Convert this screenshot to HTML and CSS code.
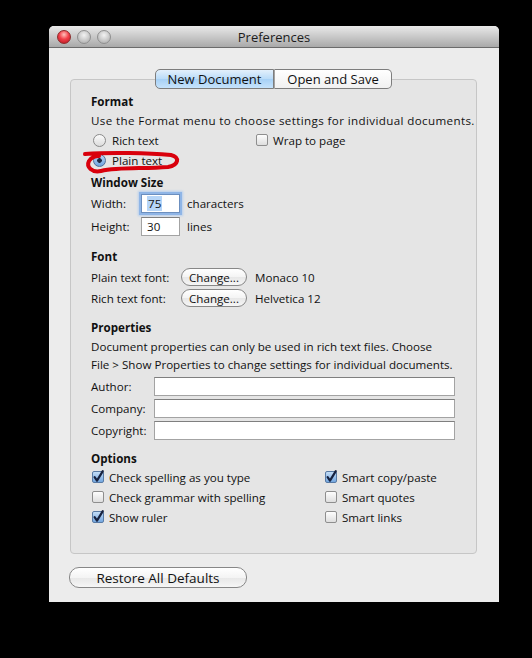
FILE: index.html
```html
<!DOCTYPE html>
<html>

<head>
    <title>Preferences</title>
    <meta name="viewport" content="width=device-width, initial-scale=1">
    <link rel="stylesheet" href="styles.css">
</head>

<body>
    <div class="window">
        <div class="titlebar">
            <div class="lights">
                <span class="light close"></span>
                <span class="light"></span>
                <span class="light"></span>
            </div>
            <div class="title">Preferences</div>
            <div></div>
        </div>

        <div class="content">
            <div class="tabs">
                <div class="tab active">New Document</div>
                <div class="tab">Open and Save</div>
            </div>

            <div class="box">
                <!-- Format -->
                <div class="heading">Format</div>
                <div class="row wide-text">Use the Format menu to choose settings for individual documents.</div>
                <div class="row format-cols">
                    <div class="opt radio-opt"><span class="radio"></span>Rich text</div>
                    <div class="opt"><span class="check"></span>Wrap to page</div>
                </div>
                <div class="row">
                    <div class="opt radio-opt"><span class="radio on"></span>Plain text</div>
                </div>

                <!-- Window size -->
                <div class="heading gap-s">Window Size</div>
                <div class="row field-row tight">
                    <span class="size-label">Width:</span>
                    <span class="input small focused"><span class="sel">75</span></span>
                    <span>characters</span>
                </div>
                <div class="row field-row tight">
                    <span class="size-label">Height:</span>
                    <span class="input small">30</span>
                    <span>lines</span>
                </div>

                <!-- Font -->
                <div class="heading gap-l">Font</div>
                <div class="row field-row font-first">
                    <span class="font-label">Plain text font:</span>
                    <span class="button change">Change...</span>
                    <span>Monaco 10</span>
                </div>
                <div class="row">
                    <span class="font-label">Rich text font:</span>
                    <span class="button change">Change...</span>
                    <span>Helvetica 12</span>
                </div>

                <!-- Properties -->
                <div class="heading gap-l">Properties</div>
                <div class="para">Document properties can only be used in rich text files. Choose<br>File &gt; Show Properties to change settings for individual documents.</div>
                <div class="row field-row prop">
                    <span class="prop-label">Author:</span>
                    <span class="input wide"></span>
                </div>
                <div class="row field-row prop">
                    <span class="prop-label">Company:</span>
                    <span class="input wide"></span>
                </div>
                <div class="row field-row prop">
                    <span class="prop-label">Copyright:</span>
                    <span class="input wide"></span>
                </div>

                <!-- Options -->
                <div class="heading gap-m">Options</div>
                <div class="options">
                    <div class="opt"><span class="check on"><svg viewBox="0 0 12 12"><path d="M2.6 6.2 L5 9.6 L10.8 0.2" /></svg></span>Check spelling as you type</div>
                    <div class="opt"><span class="check on"><svg viewBox="0 0 12 12"><path d="M2.6 6.2 L5 9.6 L10.8 0.2" /></svg></span>Smart copy/paste</div>
                    <div class="opt"><span class="check"></span>Check grammar with spelling</div>
                    <div class="opt"><span class="check"></span>Smart quotes</div>
                    <div class="opt"><span class="check on"><svg viewBox="0 0 12 12"><path d="M2.6 6.2 L5 9.6 L10.8 0.2" /></svg></span>Show ruler</div>
                    <div class="opt"><span class="check"></span>Smart links</div>
                </div>

                <!-- red marker scribble around "Plain text" -->
                <svg class="scribble" width="200" height="110" viewBox="0 0 200 110">
                    <path d="M14 74 C40 72 78 73 100 75 C109 77 108 85 97 87 C72 89 48 87 30 91 C21 93 15 87 18 81 C20 78 24 76 28 76" />
                </svg>
            </div>

            <div class="button restore">Restore All Defaults</div>
        </div>
    </div>
</body>

</html>
```

FILE: styles.css
```css
body {
    margin: 0;
    background: #000;
    font-family: "Open Sans", "DejaVu Sans", sans-serif;
    font-size: 11.6px;
    color: #111;
}

.window {
    margin: 26px 0 0 49px;
    width: 450px;
    height: 576px;
    background: #ececec;
    border-radius: 5px 5px 0 0;
    overflow: hidden;
    display: flex;
    flex-direction: column;
}

/* Title bar */
.titlebar {
    height: 21px;
    border-bottom: 1px solid #6b6b6b;
    background: linear-gradient(#e9e9e9, #a9a9a9);
    display: grid;
    grid-template-columns: 1fr auto 1fr;
    align-items: center;
}

.lights {
    display: flex;
    gap: 6px;
    padding-left: 8px;
}

.light {
    width: 14px;
    height: 14px;
    box-sizing: border-box;
    border-radius: 50%;
    border: 1px solid #8f8f8f;
    background: radial-gradient(circle at 50% 35%, #f2f2f2, #bdbdbd 70%, #a8a8a8);
}

.light.close {
    border-color: #8c2b2b;
    background: radial-gradient(circle at 50% 30%, #ffc2bb 0, #f2404a 45%, #b3121c 100%);
}

.title {
    font-size: 13px;
    color: #1c1c1c;
}

.content {
    padding: 21px 22px 0 21px;
}

/* Segmented tabs */
.tabs {
    display: flex;
    justify-content: center;
    position: relative;
    z-index: 1;
}

.tab {
    height: 20px;
    box-sizing: border-box;
    border: 1px solid #7d7d7d;
    display: flex;
    align-items: center;
    justify-content: center;
    font-size: 13px;
    background: linear-gradient(#ffffff, #f1f1f1);
}

.tab.active {
    width: 119px;
    border-radius: 5px 0 0 5px;
    background: linear-gradient(#e3f0fc, #b9dbf8 50%, #a6d0f6 51%, #c6e3fb);
}

.tab + .tab {
    width: 118px;
    border-left: 1px solid #a4a4a4;
    border-radius: 0 5px 5px 0;
}

/* Group box */
.box {
    position: relative;
    margin-top: -10px;
    height: 475px;
    box-sizing: border-box;
    border: 1px solid #c6c6c6;
    border-radius: 4px;
    background: #e5e5e5;
    padding: 12px 0 0 20px;
    white-space: nowrap;
}

.heading {
    height: 18px;
    display: flex;
    align-items: center;
    font-weight: bold;
}

.gap-s {
    margin-top: 3px;
}

.gap-m {
    margin-top: 9px;
}

.gap-l {
    margin-top: 10px;
}

.row {
    height: 20px;
    display: flex;
    align-items: center;
}

.wide-text {
    letter-spacing: 0.38px;
}

.format-cols {
    display: grid;
    grid-template-columns: 165px auto;
}

.field-row {
    height: 22px;
}

.tight {
    margin-top: 1px;
}

.font-first {
    margin-top: 1px;
}

.prop {
    height: 20px;
    margin-top: 2px;
}

.para {
    margin-top: 2px;
    line-height: 18px;
}

.size-label {
    width: 50px;
}

.font-label {
    width: 90px;
}

.prop-label {
    width: 63px;
}

/* Controls */
.opt {
    display: flex;
    align-items: center;
    gap: 5px;
}

.radio-opt {
    gap: 6px;
    padding-left: 2px;
}

.radio {
    width: 13px;
    height: 13px;
    box-sizing: border-box;
    border-radius: 50%;
    border: 1px solid #8a8a8a;
    background: linear-gradient(#fbfbfb, #dcdcdc);
}

.radio.on {
    border-color: #4f6f98;
    background: radial-gradient(circle, #1d2b44 0, #1d2b44 2px, transparent 2.6px),
        linear-gradient(#b9d6f5, #6fa4df);
}

.check {
    width: 12px;
    height: 12px;
    box-sizing: border-box;
    border: 1px solid #8e8e8e;
    border-radius: 2px;
    background: linear-gradient(#fdfdfd, #dedede);
    flex: none;
}

.options .check {
    margin-left: 1px;
}

.check.on {
    border-color: #587aa4;
    background: linear-gradient(#c3ddf7, #74a7e0);
}

.check svg {
    display: block;
    width: 12px;
    height: 12px;
    margin: -1px 0 0 -1px;
    overflow: visible;
}

.check svg path {
    fill: none;
    stroke: #17223f;
    stroke-width: 2.2;
    stroke-linecap: round;
    stroke-linejoin: round;
}

.input {
    height: 19px;
    box-sizing: border-box;
    border: 1px solid #a3a3a3;
    border-top-color: #7f7f7f;
    background: #fff;
    display: flex;
    align-items: center;
    padding-left: 5px;
}

.input.small {
    width: 39px;
    margin-right: 7px;
}

.input.wide {
    width: 301px;
}

.input.focused {
    box-shadow: 0 0 0 2px #8fb5e6, 0 0 2px 3px #b7cfee;
    border-color: #6c8fbf;
}

.sel {
    background: #b6d5f7;
    padding: 0 1px;
}

.options {
    display: grid;
    grid-template-columns: 233px auto;
    grid-auto-rows: 20px;
    align-items: center;
}

.button {
    box-sizing: border-box;
    border: 1px solid #878787;
    border-radius: 10px;
    background: linear-gradient(#ffffff, #f4f4f4 50%, #e7e7e7 51%, #f6f6f6);
    display: flex;
    align-items: center;
    justify-content: center;
}

.button.change {
    width: 66px;
    height: 18px;
    margin-right: 8px;
}

.button.restore {
    width: 178px;
    height: 21px;
    margin: 13px 0 0 -1px;
    font-size: 13.5px;
}

.scribble {
    position: absolute;
    left: 0;
    top: 0;
    pointer-events: none;
}

.scribble path {
    fill: none;
    stroke: #d9000c;
    stroke-width: 4;
    stroke-linecap: round;
    stroke-linejoin: round;
}
```
